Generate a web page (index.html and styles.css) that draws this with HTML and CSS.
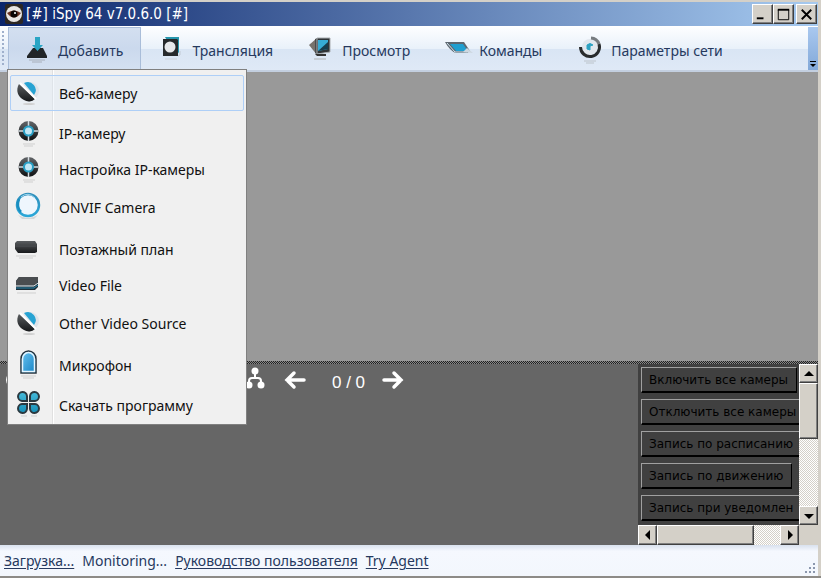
FILE: index.html
```html
<!DOCTYPE html>
<html lang="ru">
<head>
  <meta charset="UTF-8">
  <meta name="viewport" content="width=device-width, initial-scale=1.0">
  <title>iSpy 64 v7.0.6.0</title>
  <link rel="stylesheet" href="styles.css">
</head>
<body>

<svg class="defs" aria-hidden="true">
  <defs>
    <linearGradient id="dark" x1="0" y1="0" x2="0" y2="1">
      <stop offset="0" stop-color="#5a5d60"/><stop offset="1" stop-color="#17191b"/>
    </linearGradient>
    <linearGradient id="blue" x1="0" y1="0" x2="1" y2="1">
      <stop offset="0" stop-color="#6cc6f2"/><stop offset="1" stop-color="#1381c4"/>
    </linearGradient>
    <linearGradient id="cyan" x1="0" y1="0" x2="0" y2="1">
      <stop offset="0" stop-color="#45b9d8"/><stop offset="1" stop-color="#168fb8"/>
    </linearGradient>
    <linearGradient id="ring" x1="0" y1="0" x2="0" y2="1">
      <stop offset="0" stop-color="#2f8fbb"/><stop offset="1" stop-color="#2ba7d8"/>
    </linearGradient>
    <symbol id="i-dish" viewBox="0 0 32 36">
      <circle cx="18" cy="16" r="9" fill="#dfe3e8"/>
      <path d="M12 8a8 8 0 0 1 10 12z" fill="#27a3d3"/>
      <path d="M7 9l16 15a9 9 0 0 1-11 1A11 11 0 0 1 7 9z" fill="url(#dark)"/>
      <path d="M8 8l16 16" stroke="#fff" stroke-width="2"/>
      <ellipse cx="17" cy="29" rx="6" ry="1" fill="#cfcfcf"/>
    </symbol>
    <symbol id="i-target" viewBox="0 0 32 36">
      <circle cx="16.500" cy="16" r="7.500" fill="#eef3f6" stroke="url(#dark)" stroke-width="5"/>
      <path d="M16.500 6v20M6.500 16h20" stroke="#d5dde2" stroke-width="1.500"/>
      <circle cx="16.500" cy="16" r="4.500" fill="#c2e7f5" stroke="#279ec4" stroke-width="2"/>
      <path d="M11 29h12M12 31h9" stroke="#cfcfcf"/>
    </symbol>
    <symbol id="i-ring" viewBox="0 0 32 36">
      <path d="M6 26q10 6 20 0l-4 4H10z" fill="#d3d6d8"/>
      <circle cx="16" cy="16" r="11" fill="#eef6fd" stroke="url(#ring)" stroke-width="2.500"/>
      <path d="M7 10q-3 8 2 13" fill="none" stroke="#1a8ec0" stroke-width="2.500"/>
      <path d="M9 8q7-6 14 1" fill="none" stroke="#9fd6ee" stroke-width="1"/>
    </symbol>
    <symbol id="i-plan" viewBox="0 0 32 36">
      <path d="M5 10h18l2 3v8l-2 1H6l-3-4v-6z" fill="url(#dark)"/>
      <path d="M3 14h21v2H4z" fill="#44474a"/>
      <path d="M4 25h20M7 27h14" stroke="#cfcfcf"/>
    </symbol>
    <symbol id="i-file" viewBox="0 0 32 36">
      <path d="M7 10h19v10l-3 3H4v-9z" fill="#1f2d36"/>
      <path d="M7 10h19v4l-3 5H4v-5z" fill="#4a4d50"/>
      <path d="M4 19h18l4-3" fill="none" stroke="#e8f4fa" stroke-width="1"/>
      <path d="M4 21h18l4-3" fill="none" stroke="#2688ae" stroke-width="1"/>
      <path d="M5 26h19" stroke="#cfcfcf"/>
    </symbol>
    <symbol id="i-mic" viewBox="0 0 32 36">
      <path d="M9 26V12a7.500 8 0 0 1 15 0v14z" fill="url(#blue)" stroke="#27333d" stroke-width="1.500"/>
      <path d="M10.500 24.500V12a6 6.500 0 0 1 12 0v12.500z" fill="none" stroke="#e4f5ff" stroke-width="1.500"/>
      <path d="M9 29h15M11 31h11" stroke="#cfcfcf"/>
    </symbol>
    <symbol id="i-clover" viewBox="0 0 32 36">
      <g fill="url(#cyan)" stroke="#2b3940" stroke-width="2">
        <path d="M15 14h-5a4.500 4.500 0 1 1 5-5zM18 14V9a4.500 4.500 0 1 1 5 5zM15 17v5a4.500 4.500 0 1 1-5-5zM18 17h5a4.500 4.500 0 1 1-5 5z"/>
      </g>
      <path d="M9 29h6M19 29h6" stroke="#cfcfcf"/>
    </symbol>
    <symbol id="i-add" viewBox="0 0 32 36">
      <path d="M9 15h10l4 8v2H3v-2z" fill="#212528"/>
      <path d="M11 4h5v8h3l-5.500 6L8 12h3z" fill="#2aa5c4"/>
      <path d="M5 27h16M8 29h10" stroke="#b5bfcc" stroke-width="1.500"/>
    </symbol>
    <symbol id="i-cast" viewBox="0 0 32 36">
      <path d="M7 4h14v15l-3 4z" fill="#2596ad"/>
      <path d="M5 6h14l1 1v16H5z" fill="#26292b"/>
      <circle cx="12" cy="14" r="5.500" fill="#e6e8ea"/>
      <path d="M7 26h12" stroke="#cbd2da"/>
      <path d="M22 18v4l-2 1" stroke="#c2cad3" fill="none"/>
    </symbol>
    <symbol id="i-view" viewBox="0 0 32 36">
      <path d="M1 12l8-7v17z" fill="#77736d"/>
      <path d="M7 6l3-1v17l-3-2z" fill="#4a4c4e"/>
      <path d="M9 5h13v14l-13 2z" fill="#2f3437" stroke="#a9aeb1" stroke-width="1"/>
      <path d="M10 7h10v9l-10 2z" fill="#36acd5"/>
      <path d="M20 9v7l-10 2z" fill="#173d4d"/>
      <path d="M7 21h11v2H9z" fill="#333"/>
      <path d="M6 26h12" stroke="#c5ccd4" stroke-width="2"/>
    </symbol>
    <symbol id="i-cmd" viewBox="0 0 32 36">
      <path d="M0 9h19l6 9-3 2H11Q5 18 0 9z" fill="#5d6770"/>
      <path d="M5 11h13l5 7H11z" fill="#209fd0"/>
      <path d="M2 10l8 9h12" fill="none" stroke="#d2e5ee"/>
      <path d="M22 15l6 5-10-1z" fill="#cdd7df"/>
    </symbol>
    <symbol id="i-net" viewBox="0 0 32 36">
      <circle cx="13" cy="14" r="8" fill="#e1e7ed"/>
      <path d="M14 5a9 9 0 0 1 8 6" fill="none" stroke="#777c80" stroke-width="3"/>
      <path d="M22 11a9.500 9.500 0 1 1-18.500 3" fill="none" stroke="#292c2e" stroke-width="3"/>
      <path d="M10 16v-4q3-3 6 0l-3 1v4z" fill="#2da2c2" stroke="#2da2c2"/>
      <path d="M7 28h12M9 30h8" stroke="#bcc3ca"/>
    </symbol>
  </defs>
</svg>

<div class="window">
  <header class="titlebar">
    <svg class="eye" viewBox="0 0 18 20" aria-hidden="true">
      <rect width="18" height="20" rx="2" fill="#2d2722"/>
      <circle cx="9" cy="10" r="8" fill="#e9e6e4"/>
      <path d="M2 9q7-5 14 0-7 9-14 0z" fill="#6b3423"/>
      <circle cx="9" cy="10" r="3.500" fill="#0b0504"/>
      <circle cx="10" cy="9" r="1" fill="#fff"/>
    </svg>
    <h1>[#] iSpy 64 v7.0.6.0 [#]</h1>
    <div class="window-buttons">
      <button type="button" aria-label="Свернуть"><svg viewBox="0 0 20 20"><path d="M4 14h7" stroke="#000" stroke-width="2"/></svg></button>
      <button type="button" aria-label="Развернуть"><svg viewBox="0 0 20 20"><path d="M4.500 5v10.500h11V5" fill="none" stroke="#000"/><path d="M4 5h12" stroke="#000" stroke-width="2"/></svg></button>
      <button type="button" class="close" aria-label="Закрыть"><svg viewBox="0 0 20 20"><path d="M5 5l10 10M15 5L5 15" stroke="#000" stroke-width="2"/></svg></button>
    </div>
  </header>

  <nav class="toolbar">
    <div class="grip"></div>
    <div class="dropdown">
      <button type="button" class="tool active" aria-expanded="true"><svg class="icon"><use href="#i-add"/></svg>Добавить</button>
      <ul class="menu">
        <li><button type="button" class="selected"><svg class="icon"><use href="#i-dish"/></svg>Веб-камеру</button></li>
        <li><button type="button"><svg class="icon"><use href="#i-target"/></svg>IP-камеру</button></li>
        <li><button type="button"><svg class="icon"><use href="#i-target"/></svg>Настройка IP-камеры</button></li>
        <li><button type="button"><svg class="icon"><use href="#i-ring"/></svg>ONVIF Camera</button></li>
        <li><button type="button"><svg class="icon"><use href="#i-plan"/></svg>Поэтажный план</button></li>
        <li><button type="button"><svg class="icon"><use href="#i-file"/></svg>Video File</button></li>
        <li><button type="button"><svg class="icon"><use href="#i-dish"/></svg>Other Video Source</button></li>
        <li><button type="button"><svg class="icon"><use href="#i-mic"/></svg>Микрофон</button></li>
        <li><button type="button"><svg class="icon"><use href="#i-clover"/></svg>Скачать программу</button></li>
      </ul>
    </div>
    <button type="button" class="tool"><svg class="icon"><use href="#i-cast"/></svg>Трансляция</button>
    <button type="button" class="tool"><svg class="icon"><use href="#i-view"/></svg>Просмотр</button>
    <button type="button" class="tool"><svg class="icon"><use href="#i-cmd"/></svg>Команды</button>
    <button type="button" class="tool"><svg class="icon"><use href="#i-net"/></svg>Параметры сети</button>
    <button type="button" class="overflow" aria-label="Ещё"><svg viewBox="0 0 8 8"><path d="M1 1.500h6" stroke="#000"/><path d="M1 4h6L4 7z"/></svg></button>
  </nav>

  <main class="workspace"></main>
  <div class="splitter"></div>

  <section class="bottom">
    <div class="player">
      <button type="button" class="round" aria-label="Запись"><svg viewBox="0 0 20 20"><circle cx="10" cy="10" r="8" fill="#fff"/></svg></button>
      <button type="button" class="tree" aria-label="Группы">
        <svg viewBox="0 0 20 24"><g fill="#fff"><circle cx="10" cy="5" r="3.500"/><circle cx="4" cy="19" r="3.500"/><circle cx="16" cy="19" r="3.500"/></g><path d="M10 5v7M4 19v-4q0-3 3-3h6q3 0 3 3v4" fill="none" stroke="#fff" stroke-width="2"/></svg>
      </button>
      <button type="button" aria-label="Назад"><svg viewBox="0 0 24 20"><path d="M21 10H4M11 3l-7 7 7 7" fill="none" stroke="#fff" stroke-width="3.500" stroke-linecap="round"/></svg></button>
      <span class="pages">0 / 0</span>
      <button type="button" aria-label="Вперёд"><svg viewBox="0 0 24 20"><path d="M3 10h17M13 3l7 7-7 7" fill="none" stroke="#fff" stroke-width="3.500" stroke-linecap="round"/></svg></button>
    </div>

    <div class="commands">
      <div class="command-list">
        <button type="button">Включить все камеры</button>
        <button type="button">Отключить все камеры</button>
        <button type="button">Запись по расписанию</button>
        <button type="button">Запись по движению</button>
        <button type="button">Запись при уведомлен</button>
      </div>
      <div class="scroll vertical">
        <button type="button" aria-label="Вверх"><svg viewBox="0 0 10 10"><path d="M0 7h10L5 2z"/></svg></button>
        <div class="thumb"></div>
        <button type="button" aria-label="Вниз"><svg viewBox="0 0 10 10"><path d="M0 3h10L5 8z"/></svg></button>
      </div>
      <div class="scroll horizontal">
        <button type="button" aria-label="Влево"><svg viewBox="0 0 10 10"><path d="M7 0v10L2 5z"/></svg></button>
        <div class="thumb"></div>
        <button type="button" aria-label="Вправо"><svg viewBox="0 0 10 10"><path d="M3 0v10l5-5z"/></svg></button>
      </div>
    </div>
  </section>

  <footer class="status">
    <a href="#">Загрузка...</a>
    <span>Monitoring...</span>
    <a href="#">Руководство пользователя</a>
    <a href="#">Try Agent</a>
    <svg class="resize" viewBox="0 0 12 12" aria-hidden="true"><path d="M8 0h2v2H8zM4 4h2v2H4zM8 4h2v2H8zM0 8h2v2H0zM4 8h2v2H4zM8 8h2v2H8z" fill="#8b97ad"/></svg>
  </footer>
</div>

</body>
</html>
```
FILE: styles.css
```css
* {
  box-sizing: border-box;
}
body {
  margin: 0;
  font-family: "Noto Sans", sans-serif;
  font-size: 14px;
  background-color: #d4d0c8;
}
button {
  font: inherit;
  color: inherit;
  margin: 0;
  padding: 0;
  border: none;
  background: none;
}
svg {
  display: block;
}
.defs {
  position: absolute;
  width: 0;
  height: 0;
}
.window {
  display: flex;
  flex-direction: column;
  height: 100vh;
  padding: 2px 3px 0 0;
  border-bottom: 2px solid #8d8b87;
}

/* title bar */
.titlebar {
  display: flex;
  align-items: center;
  height: 24px;
  flex: none;
  padding: 0 1px 0 5px;
  background: linear-gradient(to right, #0b256b, #a6caf0);
}
.eye {
  width: 18px;
  height: 20px;
}
.titlebar h1 {
  flex: 1;
  margin: 0 0 0 3px;
  font-family: "DejaVu Sans Condensed", "DejaVu Sans", sans-serif;
  font-size: 15px;
  font-weight: normal;
  color: #fff;
}
.window-buttons {
  display: flex;
}
.window-buttons button,
.scroll button,
.thumb {
  background-color: #d4d0c8;
  border: 1px solid;
  border-color: #fff #404040 #404040 #fff;
  box-shadow: inset -1px -1px #808080;
}
.window-buttons button {
  width: 21px;
  height: 20px;
}
.window-buttons .close {
  margin-left: 2px;
}

/* toolbar */
.toolbar {
  display: flex;
  height: 46px;
  flex: none;
  gap: 1px;
  color: #26395e;
  border-top: 1px solid #fff;
  border-bottom: 2px solid #c3cfe0;
  background: linear-gradient(#fdfeff, #e9f1fa 50%, #d9e5f4 52%, #dfe9f6);
}
.grip {
  width: 2px;
  margin: 4px 3px 4px 2px;
  background: repeating-linear-gradient(#9fb0cc 0 2px, transparent 2px 4px);
}
.dropdown {
  position: relative;
}
.tool {
  display: flex;
  align-items: center;
  height: 43px;
  gap: 2px;
  padding: 5px 18px 1px 16px;
  white-space: nowrap;
}
.tool.active {
  padding: 4px 17px 0 15px;
  border: 1px solid #a9bdd9;
  background: linear-gradient(#d3dff0, #cbd9ed 50%, #d3e0f1);
}
.icon {
  width: 32px;
  height: 36px;
  flex: none;
}
.overflow {
  display: flex;
  align-items: flex-end;
  justify-content: center;
  width: 10px;
  margin-left: auto;
  padding-bottom: 2px;
  background: linear-gradient(#a9c8ef, #83a9d9);
}
.overflow svg {
  width: 8px;
  height: 8px;
}

/* drop-down menu */
.menu {
  position: absolute;
  top: 42px;
  left: -1px;
  z-index: 10;
  width: 240px;
  margin: 0;
  padding: 5px 2px 1px;
  list-style: none;
  color: #111;
  border: 1px solid #808080;
  background: linear-gradient(to right, #f0f0f0 44px, #e0e0e0 44px 45px, #fff 45px 46px, #f0f0f0 46px);
}
.menu li {
  margin-bottom: 4px;
}
.menu li:nth-child(2),
.menu li:nth-child(5),
.menu li:last-child {
  margin-bottom: 0;
}
.menu li:nth-child(3),
.menu li:nth-child(6) {
  margin-bottom: 2px;
}
.menu li:nth-child(4),
.menu li:nth-child(7) {
  margin-bottom: 6px;
}
.menu button {
  display: flex;
  align-items: center;
  gap: 15px;
  width: 100%;
  height: 36px;
  padding-left: 2px;
  text-align: left;
}
.menu .selected {
  padding-left: 1px;
  border: 1px solid #aecff7;
  border-radius: 2px;
  background-color: rgba(222, 234, 248, 0.4);
}

.workspace {
  flex: 1;
  background-color: #999;
}
.splitter {
  height: 3px;
  flex: none;
  background: repeating-conic-gradient(#222 0 25%, #888 0 50%) 0 0 / 2px 2px;
}

/* bottom part */
.bottom {
  display: flex;
  height: 181px;
  flex: none;
  background-color: #666;
}
.player {
  display: flex;
  align-items: flex-start;
  flex: 1;
  padding: 6px 0 0 4px;
}
.player button svg {
  width: 24px;
  height: 20px;
}
.player .round svg {
  width: 20px;
}
.player .round {
  margin-right: 221px;
}
.player .tree {
  margin: -4px 18px 0 0;
}
.player .tree svg {
  width: 20px;
  height: 24px;
}
.pages {
  margin: 3px 16px 0 25px;
  font-family: "Liberation Sans", sans-serif;
  font-size: 17px;
  line-height: 20px;
  color: #fff;
}
.commands {
  display: grid;
  grid-template-columns: 1fr 19px;
  grid-template-rows: 1fr 20px;
  width: 180px;
  background-color: #d4d0c8;
}
.command-list {
  display: flex;
  flex-direction: column;
  align-items: flex-start;
  gap: 6px;
  padding: 3px;
  overflow: hidden;
  background-color: #404040;
}
.command-list button {
  flex: none;
  height: 26px;
  padding: 0 8px 0 7px;
  font-family: "DejaVu Sans", sans-serif;
  font-size: 12px;
  white-space: nowrap;
  color: #000;
  border: 1px solid;
  border-color: #a0a0a0 #000 #000 #a0a0a0;
  border-bottom-width: 2px;
}
.scroll {
  display: flex;
  background: repeating-conic-gradient(#d4d0c8 0 25%, #fff 0 50%) 0 0 / 2px 2px;
}
.scroll button {
  display: flex;
  align-items: center;
  justify-content: center;
  width: 19px;
  height: 19px;
  flex: none;
}
.scroll svg {
  width: 10px;
  height: 10px;
}
.vertical {
  flex-direction: column;
}
.vertical .thumb {
  height: 56px;
}
.vertical button:last-child {
  margin-top: auto;
}
.horizontal .thumb {
  width: 97px;
}
.horizontal button {
  height: 20px;
}
.horizontal button:last-child {
  margin-left: auto;
}

/* status bar */
.status {
  display: flex;
  align-items: center;
  height: 31px;
  flex: none;
  gap: 8px;
  padding-left: 4px;
  color: #26395e;
  background: linear-gradient(#d9e1ee, #f5f8fe 20%, #f3f7fd);
}
.status a {
  color: inherit;
  text-underline-offset: 2px;
}
.resize {
  width: 12px;
  height: 12px;
  margin: auto 1px 1px auto;
}
```
